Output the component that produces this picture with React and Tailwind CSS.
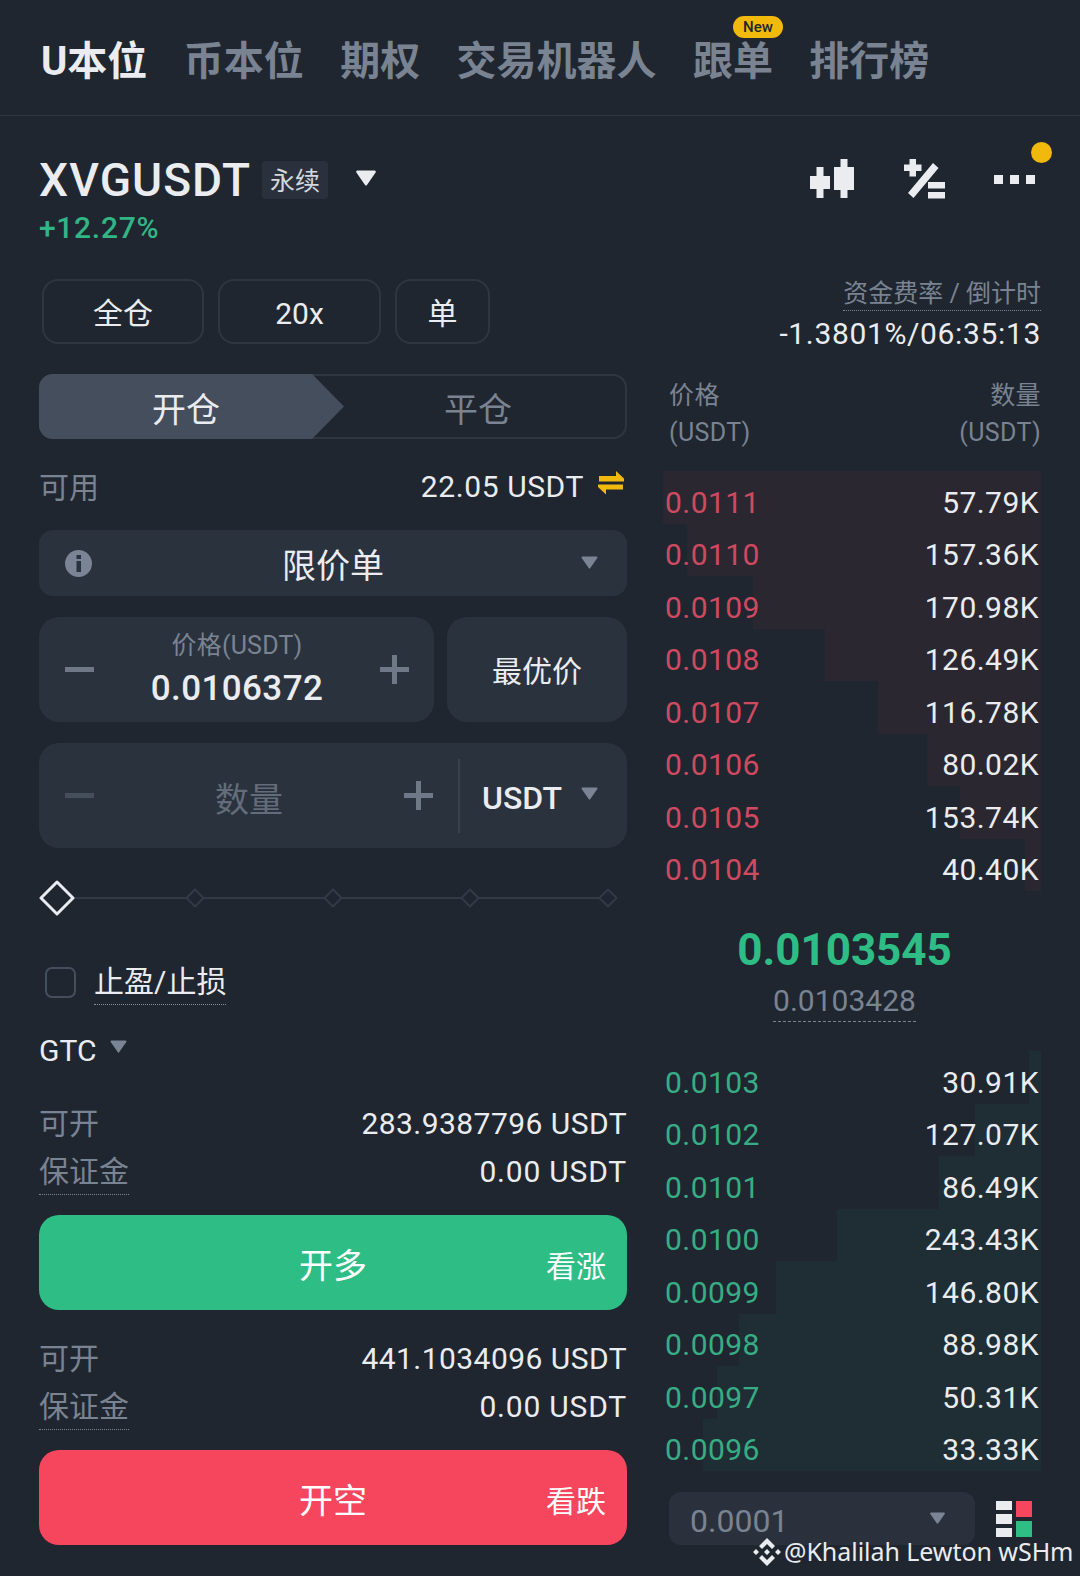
const tabs = ['U本位', '币本位', '期权', '交易机器人', '跟单', '排行榜']

const asks = [
  { price: '0.0111', qty: '57.79K', w: 378 },
  { price: '0.0110', qty: '157.36K', w: 354 },
  { price: '0.0109', qty: '170.98K', w: 288 },
  { price: '0.0108', qty: '126.49K', w: 216 },
  { price: '0.0107', qty: '116.78K', w: 163 },
  { price: '0.0106', qty: '80.02K', w: 114 },
  { price: '0.0105', qty: '153.74K', w: 81 },
  { price: '0.0104', qty: '40.40K', w: 16 },
]

const bids = [
  { price: '0.0103', qty: '30.91K', w: 12 },
  { price: '0.0102', qty: '127.07K', w: 66 },
  { price: '0.0101', qty: '86.49K', w: 102 },
  { price: '0.0100', qty: '243.43K', w: 204 },
  { price: '0.0099', qty: '146.80K', w: 265 },
  { price: '0.0098', qty: '88.98K', w: 302 },
  { price: '0.0097', qty: '50.31K', w: 324 },
  { price: '0.0096', qty: '33.33K', w: 338 },
]

const Caret = ({ className = 'w-[17px] h-[13px]', color = '#7a8494' }) => (
  <svg className={className} viewBox="0 0 17 13">
    <path d="M1.5 0.5h14a1 1 0 0 1 .8 1.6l-7 10a1 1 0 0 1-1.6 0l-7-10a1 1 0 0 1 .8-1.6z" fill={color} />
  </svg>
)

const Minus = ({ dim }) => <div className={`w-[29px] h-[5px] ${dim ? 'bg-[#454e5b]' : 'bg-[#6f7887]'}`} />

const Plus = () => (
  <svg className="w-[29px] h-[29px]" viewBox="0 0 29 29">
    <path d="M0 12h12V0h5v12h12v5H17v12h-5V17H0z" fill="#6f7887" />
  </svg>
)

const Diamond = () => (
  <div className="relative flex items-center justify-center w-[36px]">
    <svg className="w-[20px] h-[20px]" viewBox="0 0 20 20">
      <path d="M10 1.5l8.5 8.5-8.5 8.5L1.5 10z" fill="#1f2630" stroke="#323a46" strokeWidth="2" strokeLinejoin="round" />
    </svg>
  </div>
)

const StatRow = ({ avail }) => (
  <div className="flex flex-col">
    <div className="flex justify-between items-center h-[48px]">
      <span className="text-[30px] text-[#7a8391]">可开</span>
      <span className="text-[30px] tracking-[0.45px] text-[#eaecef]">{avail} USDT</span>
    </div>
    <div className="flex justify-between items-center h-[48px]">
      <span className="text-[30px] leading-[38px] text-[#7a8391] border-b border-dotted border-[#7a8391] mt-[5px] h-[42px]">保证金</span>
      <span className="text-[30px] tracking-[0.8px] text-[#eaecef]">0.00 USDT</span>
    </div>
  </div>
)

const ActionButton = ({ label, hint, color }) => (
  <div className={`relative flex items-center justify-center h-[95px] rounded-[20px] pt-[7px] text-white ${color}`}>
    <span className="text-[34px]">{label}</span>
    <span className="absolute right-[21px] text-[30px]">{hint}</span>
  </div>
)

const BookRow = ({ row, textColor, barColor }) => (
  <div className="relative h-[52.5px] pt-[10px] flex items-center justify-between pl-[3px] pr-[2px] text-[30px] tracking-[0.45px]">
    <div className={`absolute right-0 top-0 bottom-0 ${barColor}`} style={{ width: row.w }} />
    <span className={`relative ${textColor}`}>{row.price}</span>
    <span className="relative text-[#eaecef]">{row.qty}</span>
  </div>
)

export default function App() {
  return (
    <div className="relative w-[1080px] h-[1576px] overflow-hidden bg-[#1f2630] font-['Roboto','Noto_Sans_CJK_SC',sans-serif]">
      {/* top tabs */}
      <div className="flex items-center gap-[36.4px] h-[116px] pl-[41px] pt-[9px] border-b border-[#30363f]">
        {tabs.map((t, i) => (
          <div key={t} className={`relative text-[40px] font-bold ${i === 0 ? 'text-[#eaecef]' : 'text-[#7a8391]'}`}>
            {t}
            {t === '跟单' && (
              <span className="absolute left-[40px] -top-[16px] flex items-center justify-center w-[50px] h-[22px] rounded-full bg-[#f0b90b] text-[15px] leading-none font-medium text-[#1f2630]">
                New
              </span>
            )}
          </div>
        ))}
      </div>

      {/* symbol */}
      <div className="flex justify-between pl-[39px] pr-[39px] h-[163px]">
        <div className="pt-[37px]">
          <div className="flex items-center h-[54px]">
            <span className="text-[46px] leading-none font-medium tracking-[1px] text-[#eaecef]">XVGUSDT</span>
            <span className="flex items-center justify-center ml-[11px] w-[66px] h-[38px] pt-[3px] rounded-[4px] bg-[#2a313c] text-[25px] text-[#d4d7dc]">永续</span>
            <Caret className="ml-[27px] -mt-[4px] w-[22px] h-[16px]" color="#eaecef" />
          </div>
          <div className="text-[30px] leading-[36px] mt-[3px] font-medium tracking-[0.7px] text-[#32b585]">+12.27%</div>
        </div>
        <div className="relative flex items-start gap-[49px] pt-[43px]">
          <svg className="w-[45px] h-[39px]" viewBox="0 0 45 39">
            <path d="M6.5 8h7v9H20v13h-6.5v9h-7v-9H0V17h6.5z M30.5 0h7v8H44v23h-6.5v8h-7v-8H24V8h6.5z" fill="#eaecef" />
          </svg>
          <svg className="w-[41px] h-[40px]" viewBox="0 0 41 40">
            <path d="M5.500 0h6.500v5.500h5.500v6.500H12v5.500H5.500V12H0V5.500h5.500z M29 4l5.500 5-25 30-5.500-5z M24 23h17v6.500H24z M24 33h17v6.500H24z" fill="#eaecef" />
          </svg>
          <div className="flex gap-[7px] mt-[16px] mr-[6px]">
            <div className="w-[9px] h-[9px] bg-[#eaecef]" />
            <div className="w-[9px] h-[9px] bg-[#eaecef]" />
            <div className="w-[9px] h-[9px] bg-[#eaecef]" />
          </div>
          <div className="absolute right-0 top-[26px] w-[21px] h-[21px] rounded-full bg-[#f0b90b] -mr-[11px]" />
        </div>
      </div>

      {/* margin buttons + funding rate */}
      <div className="flex justify-between pl-[42px] pr-[39px] h-[95px]">
        <div className="flex gap-[14px] text-[30px] text-[#eaecef]">
          <div className="flex items-center justify-center w-[162px] h-[65px] pt-[4px] rounded-[16px] border-2 border-[#30363f]">全仓</div>
          <div className="flex items-center justify-center w-[163px] h-[65px] pt-[4px] rounded-[16px] border-2 border-[#30363f]">20x</div>
          <div className="flex items-center justify-center w-[95px] h-[65px] pt-[4px] rounded-[16px] border-2 border-[#30363f]">单</div>
        </div>
        <div className="flex flex-col items-end">
          <span className="text-[25px] leading-[30px] pb-[1px] text-[#7a8391] border-b border-dotted border-[#7a8391]">资金费率 / 倒计时</span>
          <span className="text-[30px] leading-[36px] mt-[5px] tracking-[0.65px] text-[#eaecef]">-1.3801%/06:35:13</span>
        </div>
      </div>

      <div className="flex pl-[39px] pr-[39px] gap-[36px]">
        {/* order form */}
        <div className="flex flex-col w-[588px] flex-none">
          <div className="relative flex h-[65px] rounded-[14px] border-2 border-[#30363f] text-[34px]">
            <svg className="absolute -left-[2px] -top-[2px] w-[305px] h-[65px]" viewBox="0 0 305 65">
              <path d="M14 0H273L305 32.500 273 65H14A14 14 0 0 1 0 51V14A14 14 0 0 1 14 0z" fill="#454e5c" />
            </svg>
            <div className="relative flex items-center justify-center w-[290px] pt-[8px] text-[#eaecef]">开仓</div>
            <div className="relative flex items-center justify-center flex-1 pt-[8px] text-[#7a8391]">平仓</div>
          </div>

          <div className="flex justify-between items-center h-[91px]">
            <span className="text-[30px] pt-[6px] text-[#7a8391]">可用</span>
            <div className="flex items-center gap-[14px] pr-[3px]">
              <span className="text-[30px] pt-[4px] tracking-[0.6px] text-[#eaecef]">22.05 USDT</span>
              <svg className="w-[26px] h-[24px] -mt-[3px]" viewBox="0 0 26 24">
                <path d="M1 5H18V0L26 7.500V10.500H1z M25 18.500H8V23.500L0 16V13.500H25z" fill="#f0b90b" />
              </svg>
            </div>
          </div>

          <div className="relative flex items-center justify-center h-[66px] pt-[6px] rounded-[14px] bg-[#2a323d]">
            <svg className="absolute left-[26px] top-[20px] w-[27px] h-[27px]" viewBox="0 0 27 27">
              <circle cx="13.5" cy="13.5" r="13.5" fill="#7a8494" />
              <rect x="11.5" y="5" width="4.5" height="4" fill="#2a323d" />
              <rect x="11.5" y="11" width="4.5" height="11" fill="#2a323d" />
            </svg>
            <span className="text-[34px] text-[#eaecef]">限价单</span>
            <Caret className="absolute right-[29px] top-[26px] w-[17px] h-[13px]" />
          </div>

          <div className="flex gap-[13px] mt-[21px]">
            <div className="flex items-center justify-between w-[395px] h-[105px] rounded-[20px] bg-[#2a323d] pl-[26px] pr-[25px]">
              <Minus />
              <div className="flex flex-col items-center pt-[2px]">
                <span className="text-[25px] leading-[30px] tracking-[0.2px] text-[#7a8391]">价格(USDT)</span>
                <span className="text-[35px] leading-[44px] font-medium mt-[6px] tracking-[0.4px] text-[#eaecef]">0.0106372</span>
              </div>
              <Plus />
            </div>
            <div className="flex flex-1 items-center justify-center h-[105px] pt-[4px] rounded-[20px] bg-[#2a323d] text-[30px] text-[#eaecef]">最优价</div>
          </div>

          <div className="flex items-center h-[105px] mt-[21px] rounded-[20px] bg-[#2a323d] pl-[26px]">
            <Minus dim />
            <span className="flex-1 pt-[9px] text-center text-[34px] text-[#636c7a]">数量</span>
            <Plus />
            <div className="w-[2px] h-[74px] ml-[25px] bg-[#39414d]" />
            <span className="ml-[22px] pt-[4px] text-[32px] font-medium text-[#eaecef]">USDT</span>
            <Caret className="ml-[19px] mr-[29px] -mt-[5px] w-[17px] h-[13px]" />
          </div>

          {/* leverage slider */}
          <div className="relative flex items-center justify-between h-[36px] mt-[32px] pr-[1px]">
            <div className="absolute left-[20px] right-[12px] h-[2px] bg-[#323a46]" />
            <svg className="relative w-[36px] h-[36px]" viewBox="0 0 36 36">
              <path d="M18 2l16 16-16 16L2 18z" fill="#1f2630" stroke="#eaecef" strokeWidth="3" strokeLinejoin="round" />
            </svg>
            <Diamond />
            <Diamond />
            <Diamond />
            <Diamond />
          </div>

          <div className="flex items-center pl-[6px] mt-[47px]">
            <div className="w-[31px] h-[31px] -mt-[4px] rounded-[7px] border-2 border-[#454e5c]" />
            <span className="ml-[18px] text-[30px] leading-[38px] h-[42px] text-[#eaecef] border-b border-dotted border-[#848e9c]">止盈/止损</span>
          </div>

          <div className="flex items-center mt-[25px] h-[40px]">
            <span className="text-[30px] text-[#eaecef]">GTC</span>
            <Caret className="ml-[14px] -mt-[7px] w-[17px] h-[13px]" />
          </div>

          <div className="mt-[29px]"><StatRow avail="283.9387796" /></div>
          <div className="mt-[20px]">
            <ActionButton label="开多" hint="看涨" color="bg-[#2ebd85]" />
          </div>
          <div className="mt-[24px]"><StatRow avail="441.1034096" /></div>
          <div className="mt-[20px]">
            <ActionButton label="开空" hint="看跌" color="bg-[#f6465d]" />
          </div>
        </div>

        {/* order book */}
        <div className="flex flex-col flex-1 min-w-0 -ml-[1px]">
          <div className="flex justify-between pl-[7px] pt-[3px] text-[25px] leading-[37px] tracking-[0.4px] text-[#7a8391]">
            <div className="flex flex-col">
              <span>价格</span>
              <span>(USDT)</span>
            </div>
            <div className="flex flex-col items-end">
              <span>数量</span>
              <span>(USDT)</span>
            </div>
          </div>

          <div className="mt-[20px]">
            {asks.map((r) => (
              <BookRow key={r.price} row={r} textColor="text-[#cf4a60]" barColor="bg-[#2b2730]" />
            ))}
          </div>

          <div className="flex flex-col items-center h-[160px] pr-[14px]">
            <span className="text-[44px] leading-[52px] mt-[33px] font-bold text-[#2ebd85]">0.0103545</span>
            <span className="text-[30px] leading-[36px] mt-[7px] pb-[2px] text-[#7a8391] border-b border-dashed border-[#7a8391]">0.0103428</span>
          </div>

          <div>
            {bids.map((r) => (
              <BookRow key={r.price} row={r} textColor="text-[#38ad85]" barColor="bg-[#1f2e34]" />
            ))}
          </div>

          <div className="flex items-center mt-[21px] pl-[7px]">
            <div className="relative flex items-center w-[306px] h-[53px] rounded-[12px] bg-[#2a313c] pl-[21px] pt-[4px] text-[32px] text-[#7a8391]">
              0.0001
              <Caret className="absolute right-[29px] top-[20px] w-[17px] h-[12px]" />
            </div>
            <svg className="ml-[21px] w-[37px] h-[36px]" viewBox="0 0 37 36">
              <rect x="0" y="0" width="16" height="9" fill="#eaecef" />
              <rect x="0" y="13" width="16" height="10" fill="#eaecef" />
              <rect x="0" y="27" width="16" height="9" fill="#eaecef" />
              <rect x="20" y="0" width="16" height="16" fill="#f6465d" />
              <rect x="20" y="20" width="16" height="16" fill="#2ebd85" />
            </svg>
          </div>
        </div>
      </div>

      {/* watermark */}
      <div className="absolute left-[753px] top-[1534px] flex items-center h-[36px] text-[25px] tracking-[-0.05px] text-[#eaecef] font-['Noto_Sans',sans-serif]">
        <svg className="w-[28px] h-[28px]" viewBox="0 0 28 28">
          <path d="M14 0l8 8-3 3-5-5-5 5-3-3z M14 28l-8-8 3-3 5 5 5-5 3 3z M3 11l3 3-3 3-3-3z M25 11l3 3-3 3-3-3z M14 11l3 3-3 3-3-3z" fill="#eaecef" />
        </svg>
        <span className="ml-[3px] whitespace-nowrap">@Khalilah Lewton wSHm</span>
      </div>
    </div>
  )
}
